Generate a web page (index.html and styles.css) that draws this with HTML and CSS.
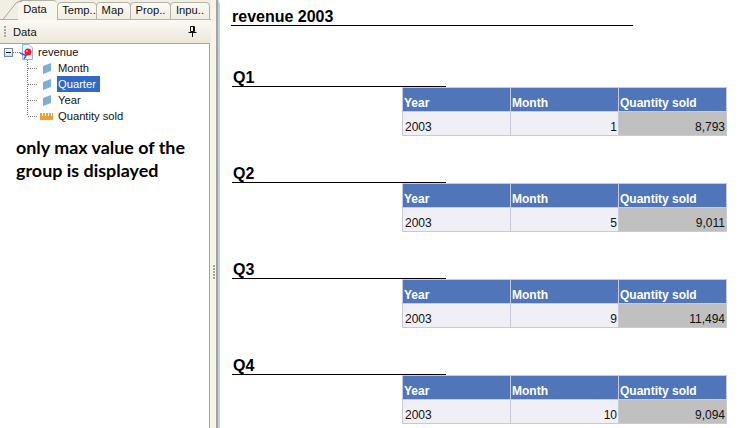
FILE: index.html
```html
<!DOCTYPE html>
<html lang="en">
<head>
<meta charset="utf-8">
<title>revenue 2003</title>
<link rel="stylesheet" href="styles.css">
</head>
<body>
<div class="app">
  <aside class="side">
    <div class="tabs">
      <svg class="tab-slant" width="22" height="20" viewBox="0 0 22 20"><path d="M0 19.5 L3 19.5 L16 3 Q18 1.5 21 1.5 L22 1.5" fill="none" stroke="#a9a79a"/></svg>
      <div class="tab active">Data</div>
      <div class="tab t-temp">Temp..</div>
      <div class="tab t-map">Map</div>
      <div class="tab t-prop">Prop..</div>
      <div class="tab t-inpu">Inpu..</div>
    </div>
    <div class="panel">
      <div class="panel-head">
        <span class="grip"></span>
        <span class="panel-title">Data</span>
        <svg class="pin" width="9" height="11" viewBox="0 0 9 11"><path d="M2.5 .5H6.5V5.5H2.5ZM.5 6.5H8.5M4.5 7V11M5.5 1V5" fill="none" stroke="#111" stroke-width="1"/></svg>
      </div>
      <div class="tree">
        <div class="row root">
          <span class="expander"><span class="minus"></span></span>
          <span class="dots-h short"></span>
          <svg class="node-icon" width="14" height="16" viewBox="0 0 14 16"><path d="M2.5 .5H9L12.5 4V15.5H2.5Z" fill="#eef3fb" stroke="#9db4d8"/><path d="M0 9L6 11.5L4 15" fill="none" stroke="#2f5fd0" stroke-width="1.5"/><circle cx="8" cy="8" r="3.5" fill="#e3202c"/><circle cx="7" cy="7" r="1" fill="#f7a0a0"/></svg>
          <span class="label root-label">revenue</span>
        </div>
        <ul class="children">
          <li class="row"><span class="dots-h"></span><svg class="dim" width="8" height="11" viewBox="0 0 8 11"><path d="M0 3L8 0V8L0 11Z" fill="#7eadd8"/></svg><span class="label">Month</span></li>
          <li class="row"><span class="dots-h"></span><svg class="dim" width="8" height="11" viewBox="0 0 8 11"><path d="M0 3L8 0V8L0 11Z" fill="#7eadd8"/></svg><span class="label selected">Quarter</span></li>
          <li class="row"><span class="dots-h"></span><svg class="dim" width="8" height="11" viewBox="0 0 8 11"><path d="M0 3L8 0V8L0 11Z" fill="#7eadd8"/></svg><span class="label">Year</span></li>
          <li class="row"><span class="dots-h"></span><svg class="measure" width="13" height="7" viewBox="0 0 13 7"><path d="M0 0H2V3H3V0H5V3H6V0H8V3H9V0H11V3H12V0H13V7H0Z" fill="#f0a030"/></svg><span class="label">Quantity sold</span></li>
        </ul>
        <p class="note">only max value of the group is displayed</p>
      </div>
    </div>
  </aside>
  <div class="splitter"><span class="handle"></span></div>
  <main class="report">
    <h1 class="report-title">revenue 2003</h1>
    <section class="group">
      <h2 class="q">Q1</h2>
      <div class="grid">
        <div class="th">Year</div><div class="th">Month</div><div class="th">Quantity sold</div>
        <div class="td">2003</div><div class="td num">1</div><div class="td num qty">8,793</div>
      </div>
    </section>
    <section class="group">
      <h2 class="q">Q2</h2>
      <div class="grid">
        <div class="th">Year</div><div class="th">Month</div><div class="th">Quantity sold</div>
        <div class="td">2003</div><div class="td num">5</div><div class="td num qty">9,011</div>
      </div>
    </section>
    <section class="group">
      <h2 class="q">Q3</h2>
      <div class="grid">
        <div class="th">Year</div><div class="th">Month</div><div class="th">Quantity sold</div>
        <div class="td">2003</div><div class="td num">9</div><div class="td num qty">11,494</div>
      </div>
    </section>
    <section class="group">
      <h2 class="q">Q4</h2>
      <div class="grid">
        <div class="th">Year</div><div class="th">Month</div><div class="th">Quantity sold</div>
        <div class="td">2003</div><div class="td num">10</div><div class="td num qty">9,094</div>
      </div>
    </section>
  </main>
</div>
</body>
</html>
```
FILE: styles.css
```css
* { box-sizing: border-box; }
html, body { margin: 0; height: 100%; overflow: hidden; background: #fff; }
.app { display: flex; width: 739px; height: 428px; font-family: "Liberation Sans", Arial, sans-serif; color: #000; }

/* left dock */
.side { width: 211px; flex: none; display: flex; flex-direction: column; background: #f7f4e8; }
.tabs { position: relative; height: 20px; flex: none; display: flex; padding-left: 18px; align-items: flex-end; background: #f1efe3; border-bottom: 1px solid #b5b3a5; font-size: 11.2px; }
.tab-slant { position: absolute; left: 0; top: 0; }
.tab { height: 18px; margin-bottom: -1px; padding-top: 1px; text-align: center; color: #111; background: linear-gradient(#fbfaf4, #f0eee0); border: 1px solid #b5b3a5; border-radius: 4px 4px 0 0; }
.tab.active { width: 39px; height: 20px; padding-top: 2px; padding-right: 5px; background: #f9f7ec; border: 0; border-bottom: 1px solid #f9f7ec; border-top: 1px solid #b5b3a5; }
.t-temp { width: 40px; padding-left: 4px; }
.t-map { width: 35px; margin-left: -1px; padding-right: 2px; }
.t-prop { width: 41px; margin-left: -1px; }
.t-inpu { width: 40px; margin-left: -1px; }

.panel { flex: 1; min-height: 0; display: flex; flex-direction: column; }
.panel-head { height: 23px; flex: none; display: flex; align-items: center; padding: 0 14px 0 4px; background: linear-gradient(#fbfaf3, #ebe8d8); font-size: 11.2px; color: #111; }
.grip { width: 2px; height: 11px; margin-right: 7px; background: repeating-linear-gradient(#a9a89c 0 2px, transparent 2px 3px); }
.panel-title { flex: 1; }
.pin { display: block; }

.tree { flex: 1; min-height: 0; background: #fff; border: 1px solid #94a6c0; border-left: 0; border-bottom: 0; font-size: 11.2px; color: #111; margin-right: 1px; padding: 0; }
.row { display: flex; align-items: center; height: 16px; }
.root { padding-left: 4px; }
.expander { width: 9px; height: 9px; flex: none; border: 1px solid #6d87ad; background: linear-gradient(#fff, #d8dee8); display: flex; align-items: center; justify-content: center; }
.minus { width: 5px; height: 1px; background: #111; }
.dots-h { width: 10px; height: 1px; flex: none; margin-right: 4px; background: repeating-linear-gradient(90deg, #777 0 1px, transparent 1px 2px); }
.dots-h.short { width: 8px; margin: 0 -1px 0 0; }
.node-icon { flex: none; }
.root-label { margin-left: 3px; }
.children { list-style: none; margin: 0; padding: 0 0 0 28px; position: relative; }
.children::before { content: ""; position: absolute; left: 27px; top: 0; height: 56px; width: 1px; background: repeating-linear-gradient(#777 0 1px, transparent 1px 2px); }
.dim { flex: none; margin-left: 1px; margin-right: 6px; }
.measure { flex: none; margin-left: -2px; margin-right: 4px; }
.label { display: inline-block; height: 16px; line-height: 16px; padding: 0 1px; }
.selected { background: #316ac5; color: #fff; padding-right: 4px; }
.note { margin: 12px 0 0 16px; font-family: Lato, "Open Sans", sans-serif; font-weight: 700; font-size: 17.9px; line-height: 23px; color: #000; width: 190px; }

/* splitter */
.splitter { width: 7px; flex: none; display: flex; align-items: center; justify-content: center; background: #f7f4e8; border-right: 2px solid #a6a495; padding-top: 116px; }
.handle { width: 2px; height: 14px; background: repeating-linear-gradient(#a9a89c 0 2px, transparent 2px 3px); }

/* report */
.report { flex: 1; min-width: 0; overflow: hidden; background: #fff; border-top: 4px solid transparent; border-left: 2px solid #bcd0e8; position: relative; }
.report::before { content: ""; position: absolute; left: -2px; right: 0; top: -4px; height: 4px; background: linear-gradient(#c5d3e6 0 2px, #a6a495 2px 3px, #fff 3px); }
.report-title { width: 402px; height: 22px; margin: 0 0 0 11px; padding: 3px 0 0 1px; border-bottom: 1px solid #000; font-size: 16px; font-weight: 700; line-height: 19px; }
.group { height: 96px; padding-left: 12px; }
.group:first-of-type { margin-top: 36px; }
.q { width: 214px; height: 25px; margin: 0; padding-left: 1px; border-bottom: 1px solid #000; font-size: 16px; font-weight: 700; line-height: 31px; }
.grid { display: grid; grid-template-columns: repeat(3, 107px); gap: 1px; width: 325px; margin-left: 170px; padding: 1px; background: #c9c9da; font-size: 12px; }
.th { height: 23px; padding: 7px 1px 0; background: #5175b9; color: #fff; font-weight: 700; line-height: 16px; }
.td { height: 23px; padding: 7px 1px 0 2px; background: #efeff5; color: #111; line-height: 16px; }
.num { text-align: right; }
.qty { background: #c0c0c0; }
```
